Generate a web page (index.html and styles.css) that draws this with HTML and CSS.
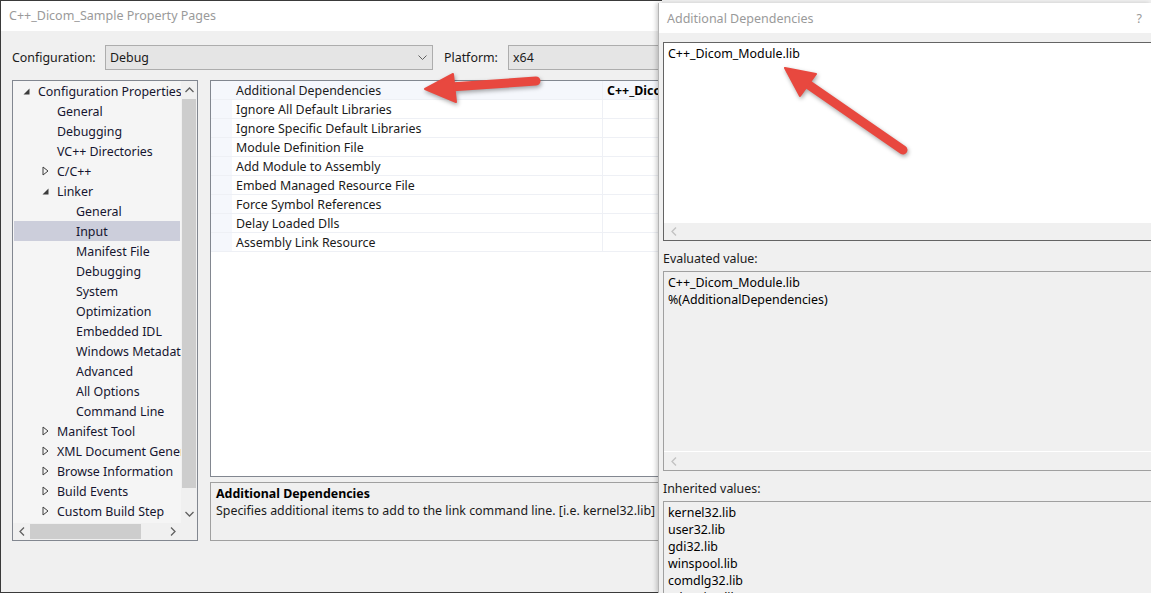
FILE: index.html
```html
<!DOCTYPE html>
<html>
<head>
  <link rel="stylesheet" href="styles.css">
</head>
<body>
  <!-- Property Pages window -->
  <div class="window">
    <div class="titlebar">C++_Dicom_Sample Property Pages</div>
    <div class="client">
      <div class="config-row">
        <span class="config-label">Configuration:</span>
        <div class="combo combo-config">
          <span>Debug</span>
          <svg width="9" height="5" viewBox="0 0 9 5"><polyline points="0.5,0.5 4.5,4.5 8.5,0.5" fill="none" stroke="#606060" stroke-width="1"/></svg>
        </div>
        <span class="platform-label">Platform:</span>
        <div class="combo combo-platform"><span>x64</span></div>
      </div>

      <div class="panes">
        <!-- Tree -->
        <div class="tree">
          <div class="tree-list">
            <div class="tree-row lvl0"><span class="toggle"><svg width="7" height="7" viewBox="0 0 7 7"><polygon points="6.5,0.5 6.5,6.5 0.5,6.5" fill="#3c3c3c"/></svg></span>Configuration Properties</div>
            <div class="tree-row lvl1"><span class="toggle"></span>General</div>
            <div class="tree-row lvl1"><span class="toggle"></span>Debugging</div>
            <div class="tree-row lvl1"><span class="toggle"></span>VC++ Directories</div>
            <div class="tree-row lvl1"><span class="toggle"><svg width="7" height="10" viewBox="0 0 7 10"><polygon points="1,1 6,5 1,9" fill="none" stroke="#3c3c3c" stroke-width="1"/></svg></span>C/C++</div>
            <div class="tree-row lvl1"><span class="toggle"><svg width="7" height="7" viewBox="0 0 7 7"><polygon points="6.5,0.5 6.5,6.5 0.5,6.5" fill="#3c3c3c"/></svg></span>Linker</div>
            <div class="tree-row lvl2"><span class="toggle"></span>General</div>
            <div class="tree-row lvl2 selected"><span class="toggle"></span>Input</div>
            <div class="tree-row lvl2"><span class="toggle"></span>Manifest File</div>
            <div class="tree-row lvl2"><span class="toggle"></span>Debugging</div>
            <div class="tree-row lvl2"><span class="toggle"></span>System</div>
            <div class="tree-row lvl2"><span class="toggle"></span>Optimization</div>
            <div class="tree-row lvl2"><span class="toggle"></span>Embedded IDL</div>
            <div class="tree-row lvl2"><span class="toggle"></span>Windows Metadata</div>
            <div class="tree-row lvl2"><span class="toggle"></span>Advanced</div>
            <div class="tree-row lvl2"><span class="toggle"></span>All Options</div>
            <div class="tree-row lvl2"><span class="toggle"></span>Command Line</div>
            <div class="tree-row lvl1"><span class="toggle"><svg width="7" height="10" viewBox="0 0 7 10"><polygon points="1,1 6,5 1,9" fill="none" stroke="#3c3c3c" stroke-width="1"/></svg></span>Manifest Tool</div>
            <div class="tree-row lvl1"><span class="toggle"><svg width="7" height="10" viewBox="0 0 7 10"><polygon points="1,1 6,5 1,9" fill="none" stroke="#3c3c3c" stroke-width="1"/></svg></span>XML Document Generator</div>
            <div class="tree-row lvl1"><span class="toggle"><svg width="7" height="10" viewBox="0 0 7 10"><polygon points="1,1 6,5 1,9" fill="none" stroke="#3c3c3c" stroke-width="1"/></svg></span>Browse Information</div>
            <div class="tree-row lvl1"><span class="toggle"><svg width="7" height="10" viewBox="0 0 7 10"><polygon points="1,1 6,5 1,9" fill="none" stroke="#3c3c3c" stroke-width="1"/></svg></span>Build Events</div>
            <div class="tree-row lvl1"><span class="toggle"><svg width="7" height="10" viewBox="0 0 7 10"><polygon points="1,1 6,5 1,9" fill="none" stroke="#3c3c3c" stroke-width="1"/></svg></span>Custom Build Step</div>
          </div>
          <div class="vscroll">
            <div class="sb-btn"><svg width="9" height="6" viewBox="0 0 9 6"><polyline points="0.5,5 4.5,1 8.5,5" fill="none" stroke="#606060" stroke-width="1.3"/></svg></div>
            <div class="vthumb"></div>
            <div class="vspace"></div>
            <div class="sb-btn"><svg width="9" height="6" viewBox="0 0 9 6"><polyline points="0.5,1 4.5,5 8.5,1" fill="none" stroke="#606060" stroke-width="1.3"/></svg></div>
          </div>
          <div class="hscroll">
            <div class="sb-btn"><svg width="6" height="9" viewBox="0 0 6 9"><polyline points="5,0.5 1,4.5 5,8.5" fill="none" stroke="#606060" stroke-width="1.3"/></svg></div>
            <div class="hthumb"></div>
            <div class="hspace"></div>
            <div class="sb-btn"><svg width="6" height="9" viewBox="0 0 6 9"><polyline points="1,0.5 5,4.5 1,8.5" fill="none" stroke="#606060" stroke-width="1.3"/></svg></div>
          </div>
          <div class="corner"></div>
        </div>

        <!-- Property grid + description -->
        <div class="right-pane">
          <div class="grid">
            <div class="prop-row current"><span class="gutter"></span><span class="prop-name">Additional Dependencies</span><span class="prop-value">C++_Dicom_Module.lib;%(AdditionalDependencies)</span></div>
            <div class="prop-row"><span class="gutter"></span><span class="prop-name">Ignore All Default Libraries</span><span class="prop-value"></span></div>
            <div class="prop-row"><span class="gutter"></span><span class="prop-name">Ignore Specific Default Libraries</span><span class="prop-value"></span></div>
            <div class="prop-row"><span class="gutter"></span><span class="prop-name">Module Definition File</span><span class="prop-value"></span></div>
            <div class="prop-row"><span class="gutter"></span><span class="prop-name">Add Module to Assembly</span><span class="prop-value"></span></div>
            <div class="prop-row"><span class="gutter"></span><span class="prop-name">Embed Managed Resource File</span><span class="prop-value"></span></div>
            <div class="prop-row"><span class="gutter"></span><span class="prop-name">Force Symbol References</span><span class="prop-value"></span></div>
            <div class="prop-row"><span class="gutter"></span><span class="prop-name">Delay Loaded Dlls</span><span class="prop-value"></span></div>
            <div class="prop-row"><span class="gutter"></span><span class="prop-name">Assembly Link Resource</span><span class="prop-value"></span></div>
          </div>
          <div class="desc">
            <div class="desc-title">Additional Dependencies</div>
            <div class="desc-text">Specifies additional items to add to the link command line. [i.e. kernel32.lib]</div>
          </div>
        </div>
      </div>
    </div>
  </div>

  <!-- Additional Dependencies dialog -->
  <div class="dialog">
    <div class="dialog-title"><span>Additional Dependencies</span><span>?</span></div>
    <div class="dialog-body">
      <div class="edit-box">
        <div class="box-text">C++_Dicom_Module.lib</div>
        <div class="box-hbar"><svg width="6" height="9" viewBox="0 0 6 9"><polyline points="5,0.5 1,4.5 5,8.5" fill="none" stroke="#c2c2c2" stroke-width="1.3"/></svg></div>
      </div>

      <div class="field-label">Evaluated value:</div>
      <div class="value-box eval-box">
        <div class="box-text">C++_Dicom_Module.lib<br>%(AdditionalDependencies)</div>
        <div class="box-hbar"><svg width="6" height="9" viewBox="0 0 6 9"><polyline points="5,0.5 1,4.5 5,8.5" fill="none" stroke="#c2c2c2" stroke-width="1.3"/></svg></div>
      </div>

      <div class="field-label">Inherited values:</div>
      <div class="value-box inherit-box">
        <div class="box-text">kernel32.lib<br>user32.lib<br>gdi32.lib<br>winspool.lib<br>comdlg32.lib<br>advapi32.lib</div>
      </div>
    </div>
  </div>

  <!-- annotation arrows -->
  <svg class="arrows" width="1151" height="593" viewBox="0 0 1151 593">
    <line x1="536" y1="81" x2="450" y2="87" stroke="#e8483f" stroke-width="9" stroke-linecap="round"/>
    <polygon points="425,89 453,74 456,102" fill="#e8483f" stroke="#e8483f" stroke-width="2" stroke-linejoin="round"/>
    <line x1="903" y1="150" x2="806" y2="83" stroke="#e8483f" stroke-width="9" stroke-linecap="round"/>
    <polygon points="785,68 816,74 800,96" fill="#e8483f" stroke="#e8483f" stroke-width="2" stroke-linejoin="round"/>
  </svg>
</body>
</html>
```

FILE: styles.css
```css
* {
  box-sizing: border-box;
}

body {
  margin: 0;
  width: 1151px;
  height: 593px;
  overflow: hidden;
  position: relative;
  font-family: "Noto Sans", "Liberation Sans", sans-serif;
  font-size: 12.4px;
  color: #1a1a1a;
  background: #f0f0f0;
}

/* main window */
.window {
  width: 662px;
  height: 593px;
  border: 1px solid #3a3a3a;
  border-right: none;
  display: flex;
  flex-direction: column;
  background: #f0f0f0;
}

.titlebar {
  height: 30px;
  line-height: 30px;
  padding-left: 8px;
  background: #fff;
  color: #9a9a9a;
  font-size: 12.5px;
}

.client {
  flex: 1;
  padding: 14px 0 0 11px;
}

.config-row {
  display: flex;
  align-items: center;
  height: 25px;
}

.config-row > * {
  flex: none;
}

.config-label {
  width: 93px;
}

.platform-label {
  width: 64px;
  margin-left: 11px;
}

.combo {
  height: 25px;
  display: flex;
  align-items: center;
  padding-left: 4px;
  border: 1px solid #adadad;
  background: #e5e5e5;
}

.combo-config {
  width: 328px;
  justify-content: space-between;
  padding-right: 5px;
}

.combo-platform {
  width: 200px;
}

.panes {
  display: flex;
  gap: 12px;
  margin-top: 10px;
}

/* tree */
.tree {
  width: 186px;
  height: 461px;
  flex: none;
  display: grid;
  grid-template-columns: 1fr 16px;
  grid-template-rows: 442px 17px;
  border: 1px solid #828790;
  background: #f5f5f5;
}

.tree-list {
  overflow: hidden;
  padding: 0 1px;
}

.tree-row {
  height: 20px;
  display: flex;
  align-items: center;
  white-space: nowrap;
  color: #151530;
}

.tree-row.selected {
  background: #cccedb;
}

.lvl0 { padding-left: 5px; }
.lvl1 { padding-left: 24px; }
.lvl2 { padding-left: 43px; }

.toggle {
  width: 19px;
  flex: none;
  display: flex;
  align-items: center;
  padding-left: 4px;
}

.vscroll {
  display: flex;
  flex-direction: column;
  background: #f0f0f0;
}

.sb-btn {
  flex: none;
  width: 17px;
  height: 17px;
  display: flex;
  align-items: center;
  justify-content: center;
}

.vscroll .sb-btn {
  width: 16px;
  height: 18px;
}

.vthumb {
  height: 389px;
  margin: 0 1px;
  background: #cdcdcd;
}

.vspace {
  flex: 1;
}

.hscroll {
  display: flex;
  align-items: center;
  background: #f0f0f0;
}

.hthumb {
  width: 111px;
  height: 15px;
  background: #cdcdcd;
}

.hspace {
  flex: 1;
}

.corner {
  background: #f0f0f0;
}

/* property grid */
.right-pane {
  flex: 1;
  display: flex;
  flex-direction: column;
}

.grid {
  height: 397px;
  border: 1px solid #828790;
  border-right: none;
  background: #fff;
  overflow: hidden;
}

.prop-row {
  height: 19px;
  display: flex;
  align-items: center;
  border-bottom: 1px solid #eef0f5;
  white-space: nowrap;
}

.prop-row.current {
  background: #f5f7fc;
}

.gutter {
  width: 21px;
  height: 100%;
  flex: none;
  background: #f5f7fc;
}

.prop-name {
  width: 371px;
  height: 100%;
  flex: none;
  display: flex;
  align-items: center;
  padding-left: 4px;
  border-right: 1px solid #eef0f5;
}

.prop-value {
  padding-left: 4px;
  font-weight: bold;
  color: #000;
}

.desc {
  height: 59px;
  margin-top: 5px;
  padding: 2px 0 0 5px;
  border: 1px solid #a0a0a0;
  border-right: none;
  line-height: 17px;
  white-space: nowrap;
}

.desc-title {
  font-weight: bold;
  color: #000;
}

/* dialog */
.dialog {
  position: absolute;
  left: 658px;
  top: 3px;
  width: 493px;
  height: 590px;
  display: flex;
  flex-direction: column;
  overflow: hidden;
  border-left: 1px solid #b4b4b4;
  background: #f0f0f0;
  box-shadow: -2px 0 4px rgba(0, 0, 0, 0.18);
}

.dialog-title {
  height: 30px;
  flex: none;
  display: flex;
  justify-content: space-between;
  align-items: center;
  padding: 0 9px 0 8px;
  background: #fff;
  color: #9a9a9a;
  font-size: 12.5px;
}

.dialog-body {
  padding: 9px 0 0 4px;
}

.edit-box {
  height: 199px;
  margin-right: -10px;
  display: flex;
  flex-direction: column;
  border: 1px solid #646464;
  background: #fff;
}

.box-text {
  flex: 1;
  padding: 2px 4px;
  line-height: 17px;
  color: #000;
}

.box-hbar {
  height: 17px;
  flex: none;
  display: flex;
  align-items: center;
  padding-left: 7px;
  background: #f0f0f0;
}

.field-label {
  margin-top: 9px;
  line-height: 17px;
}

.value-box {
  margin-top: 4px;
  margin-right: -10px;
  display: flex;
  flex-direction: column;
  border: 1px solid #a0a0a0;
  background: #f0f0f0;
}

.eval-box {
  height: 200px;
}

.eval-box .box-hbar {
  height: 19px;
  border-top: 1px solid #fff;
}

.inherit-box {
  height: 120px;
}

/* annotations */
.arrows {
  position: absolute;
  left: 0;
  top: 0;
  pointer-events: none;
  filter: drop-shadow(1px 2px 2px rgba(0, 0, 0, 0.35));
}
```
